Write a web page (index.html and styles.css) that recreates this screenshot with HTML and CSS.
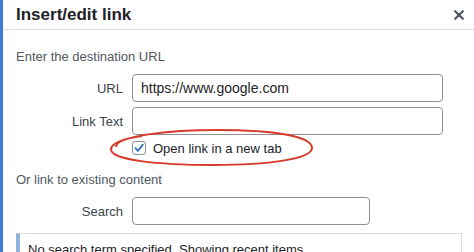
FILE: index.html
```html
<!DOCTYPE html>
<html>
<head>
<meta charset="utf-8">
<link rel="stylesheet" href="styles.css">
</head>
<body>
<div class="dialog">
  <div class="header">
    <h1 class="title">Insert/edit link</h1>
    <svg class="close" width="10" height="10" viewBox="0 0 10 10"><path d="M1.2 1.2 L8.8 8.8 M8.8 1.2 L1.2 8.8" stroke="#50575e" stroke-width="2.2" stroke-linecap="round"/></svg>
  </div>
  <div class="content">
    <p class="section">Enter the destination URL</p>
    <div class="row first">
      <label class="label">URL</label>
      <div class="input">https://www.google.com</div>
    </div>
    <div class="row">
      <label class="label">Link Text</label>
      <div class="input"></div>
    </div>
    <div class="check-row">
      <span class="checkbox">
        <svg width="12" height="12" viewBox="0 0 12 12"><path d="M2.4 6.2 L5 8.8 L9.8 2.6" fill="none" stroke="#2b6fc4" stroke-width="1.8" stroke-linecap="round" stroke-linejoin="round"/></svg>
      </span>
      <span class="check-label">Open link in a new tab</span>
      <svg class="ring" width="214" height="42" viewBox="0 0 214 42"><path d="M8 20 C 8 9, 60 3, 110 3 C 165 3, 204 9, 204 21 C 204 32, 160 38, 105 38 C 50 38, 2 33, 3 22 C 4 15, 20 11, 34 9" fill="none" stroke="#d63a2a" stroke-width="2"/></svg>
    </div>
    <p class="section second">Or link to existing content</p>
    <div class="row search-row">
      <label class="label">Search</label>
      <div class="input short"></div>
    </div>
    <div class="notice">No search term specified. Showing recent items.</div>
  </div>
</div>
</body>
</html>
```
FILE: styles.css
```css
* { box-sizing: border-box; }
html, body { margin: 0; padding: 0; background: #fff; }
body {
  font-family: "Liberation Sans", Arial, sans-serif;
  color: #1d2327;
  width: 474px;
  height: 252px;
  overflow: hidden;
}
.dialog {
  border-left: 3px solid #3f7bd1;
  height: 252px;
  overflow: hidden;
}
.header {
  height: 30px;
  border-bottom: 1px solid #dcdcde;
  display: flex;
  align-items: center;
  justify-content: space-between;
  padding: 0 10px 0 13px;
}
.title {
  margin: 0;
  font-size: 17px;
  font-weight: bold;
  color: #1d2327;
  line-height: 29px;
}
.close {
  display: block;
  margin-top: 1px;
}
.content {
  padding: 18px 0 0 13px;
  position: relative;
}
.section {
  margin: 0;
  font-size: 13px;
  line-height: 18px;
  color: #50575e;
}
.section.second { margin-top: 14px; }
.row {
  display: flex;
  align-items: center;
  gap: 9px;
  margin-top: 5px;
}
.row.first { margin-top: 8px; }
.row.search-row { margin-top: 8px; }
.label {
  width: 107px;
  text-align: right;
  font-size: 13px;
  color: #3c434a;
}
.input {
  width: 311px;
  height: 28px;
  border: 1px solid #8c8f94;
  border-radius: 4px;
  padding: 0 8px;
  font-size: 14px;
  line-height: 26px;
  color: #1d2327;
}
.input.short { width: 238px; }
.check-row {
  position: relative;
  display: flex;
  align-items: center;
  gap: 7px;
  margin-top: 4px;
  padding-left: 116px;
  height: 18px;
}
.checkbox {
  width: 14px;
  height: 14px;
  border: 1px solid #8c8f94;
  border-radius: 3px;
  display: flex;
  align-items: center;
  justify-content: center;
  background: #fff;
}
.check-label {
  font-size: 13px;
  color: #1d2327;
}
.ring {
  position: absolute;
  left: 92px;
  top: -12px;
}
.notice {
  margin-top: 8px;
  width: 446px;
  border: 1px solid #dcdcde;
  border-left: 4px solid #8fb3dd;
  padding: 7px 8px;
  font-size: 13px;
  line-height: 18px;
  color: #1d2327;
}
```
